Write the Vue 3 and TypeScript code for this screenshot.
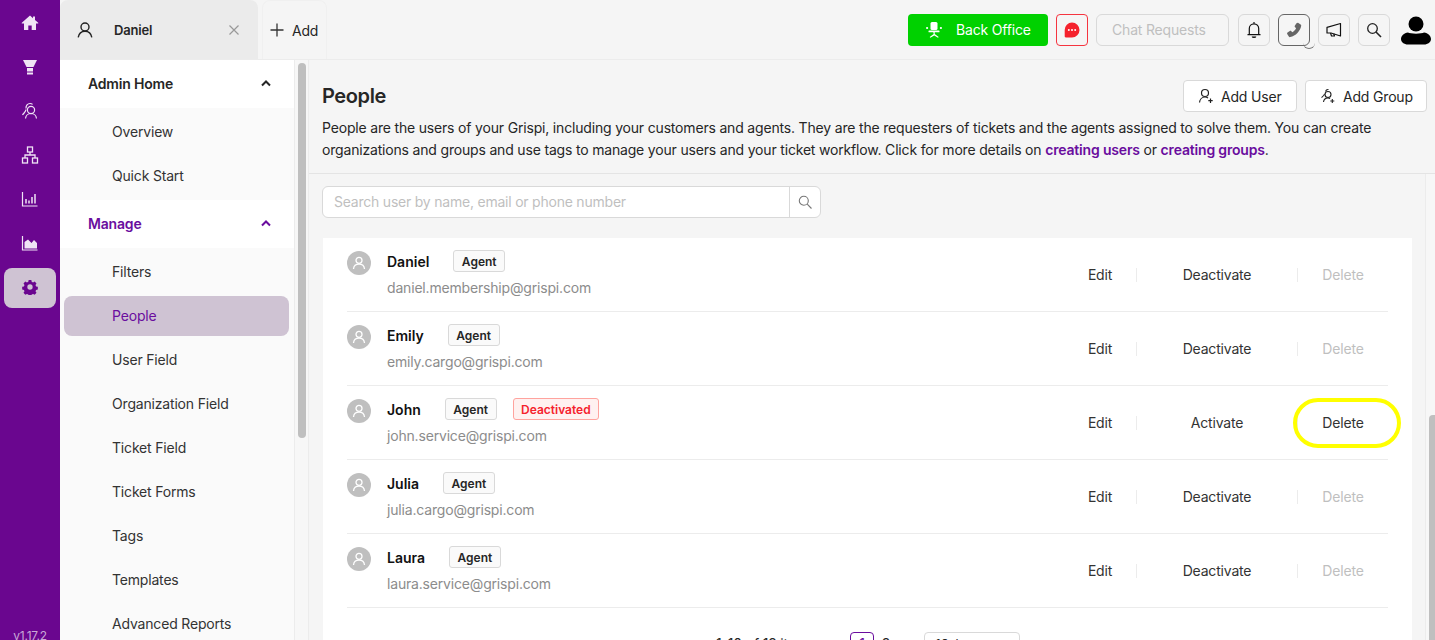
<template>
  <div class="app">
    <!-- Icon rail -->
    <aside class="rail">
      <a v-for="icon in railIcons" :key="icon.name" class="rail-item" :class="{ active: icon.name === 'settings' }">
        <svg :width="icon.size" :height="icon.size" viewBox="0 0 18 18" v-html="icon.svg"></svg>
      </a>
      <span class="version">v1.17.2</span>
    </aside>

    <div class="shell">
      <!-- Top bar -->
      <header class="topbar">
        <div class="tab tab-open">
          <svg class="tab-user" width="18" height="18" viewBox="0 0 18 18" fill="none" stroke="#222" stroke-width="1.4"><circle cx="9" cy="6" r="4"/><path d="M2.2 16.4c.6-3.600 3.300-6.200 6.800-6.200s6.200 2.600 6.800 6.200"/></svg>
          <span class="tab-name">Daniel</span>
          <svg width="12" height="12" viewBox="0 0 12 12" stroke="#999" stroke-width="1.2"><path d="M1.500 1.500l9 9M10.500 1.500l-9 9"/></svg>
        </div>
        <div class="tab tab-add">
          <svg width="14" height="14" viewBox="0 0 14 14" stroke="#333" stroke-width="1.300"><path d="M7 .5v13M.5 7h13"/></svg>
          <span>Add</span>
        </div>

        <div class="top-actions">
          <button class="btn-office">
            <svg width="18" height="18" viewBox="0 0 18 18" fill="#fff"><rect x="5.500" y="1" width="7" height="8" rx="1.500"/><rect x="1" y="6" width="2.200" height="2" rx="1"/><rect x="14.800" y="6" width="2.200" height="2" rx="1"/><rect x="3.500" y="9.500" width="11" height="1.800" rx=".6"/><path d="M8.300 11h1.400v2l4 2.900-.7.900-3.800-2.400-3.800 2.400-.7-.9 4-2.900z"/></svg>
            <span>Back Office</span>
          </button>
          <button class="icon-btn chat-btn">
            <svg width="18" height="18" viewBox="0 0 18 18"><path fill="#f5222d" d="M9 1.500a7.500 7.500 0 0 1 0 15H2.800c-.7 0-1.100-.6-1.100-1.200V9A7.500 7.500 0 0 1 9 1.500z"/><circle cx="5.800" cy="9" r="1" fill="#fff"/><circle cx="9" cy="9" r="1" fill="#fff"/><circle cx="12.200" cy="9" r="1" fill="#fff"/></svg>
          </button>
          <button class="chat-requests">Chat Requests</button>
          <button class="icon-btn">
            <svg width="16" height="18" viewBox="0 0 16 18" fill="none" stroke="#111" stroke-width="1.200"><path d="M3.300 13.500V7.500a4.700 4.700 0 0 1 9.400 0v6M1.500 13.700h13"/><path d="M8 1v1.500"/><path d="M6.300 15.500c.4 1 3 1 3.400 0" stroke-width="1.600"/></svg>
          </button>
          <div class="phone-wrap">
            <button class="icon-btn phone-btn">
              <svg width="18" height="18" viewBox="0 0 18 18"><path fill="#666" d="M13 1.800l2.600 1.600c.5.300.7.800.6 1.400-.8 5.300-5.500 10.200-11 11.300-.6.100-1.100-.1-1.400-.6l-1.600-2.600c-.3-.5-.2-1 .3-1.400l2.300-1.500c.4-.3.900-.2 1.300.1l1.200 1.200c1.600-.9 3-2.400 3.800-4l-1.200-1.200c-.3-.4-.4-.9-.1-1.300l1.500-2.300c.4-.5.900-.6 1.700-.7z"/></svg>
            </button>
            <i class="phone-arc"></i>
          </div>
          <button class="icon-btn">
            <svg width="18" height="18" viewBox="0 0 18 18" fill="none" stroke="#111" stroke-width="1.200" stroke-linejoin="round"><path d="M15.500 2.500v12.500L6 12H2V6.300z"/><path d="M5.500 12l1 3h3l-.7-2.200"/></svg>
          </button>
          <button class="icon-btn">
            <svg width="16" height="16" viewBox="0 0 16 16" fill="none" stroke="#222" stroke-width="1.300"><circle cx="6.500" cy="6.500" r="4.800"/><path d="M10 10l5 5" stroke-width="1.600"/></svg>
          </button>
          <svg class="me" width="30" height="30" viewBox="0 0 30 30" fill="#000"><circle cx="15" cy="9" r="7.500"/><path d="M7 17.500c2 1.500 14 1.500 16 0 4 .6 7 3.500 7 6.500 0 3-3 5.500-7 5.500H7c-4 0-7-2.500-7-5.500s3-5.900 7-6.500z"/></svg>
        </div>
      </header>

      <div class="body">
        <!-- Sidebar -->
        <nav class="sidebar">
          <template v-for="group in navGroups" :key="group.title">
            <div class="group-head" :class="{ open: group.active }">
              <span>{{ group.title }}</span>
              <svg width="10" height="7" viewBox="0 0 10 7" fill="none" stroke="currentColor" stroke-width="2"><path d="M1 5.500l4-4 4 4"/></svg>
            </div>
            <ul class="group-items">
              <li v-for="item in group.items" :key="item" :class="{ current: item === 'People' }">{{ item }}</li>
            </ul>
          </template>
        </nav>
        <div class="side-scroll"><i></i></div>

        <!-- Main -->
        <main class="main">
          <section class="page-head">
            <div class="title-row">
              <h1>People</h1>
              <div class="title-actions">
                <button class="btn btn-user">
                  <svg width="16" height="16" viewBox="0 0 16 16" fill="none" stroke="#222" stroke-width="1.200"><circle cx="7" cy="5" r="3.500"/><path d="M1.500 14.500c.3-3 2.600-5.500 5.500-5.500 1.200 0 2.200.4 3 1M12.500 10.500v4.500M10.300 12.700h4.400"/></svg>
                  Add User
                </button>
                <button class="btn btn-group">
                  <svg width="16" height="16" viewBox="0 0 16 16" fill="none" stroke="#222" stroke-width="1.100"><circle cx="8" cy="6.500" r="3"/><path d="M3.500 14c.3-2.400 2.100-4 4.500-4 .8 0 1.500.2 2.100.5M12.300 11v4M10.300 13h4M5.500 3.500C6 2 7.200 1.300 8.500 1.500M4.500 6c-.3 1.500-1.800 2.500-3 3.500"/></svg>
                  Add Group
                </button>
              </div>
            </div>
            <p>
              People are the users of your Grispi, including your customers and agents. They are the requesters of tickets and the agents assigned to solve them. You can create
              organizations and groups and use tags to manage your users and your ticket workflow. Click for more details on <a>creating users</a> or <a>creating groups</a>.
            </p>
          </section>

          <div class="content">
            <div class="content-inner">
              <div class="search">
                <input type="text" placeholder="Search user by name, email or phone number" />
                <span class="search-btn">
                  <svg width="14" height="14" viewBox="0 0 14 14" fill="none" stroke="#777" stroke-width="1.100"><circle cx="5.800" cy="5.800" r="4.500"/><path d="M9.200 9.200l4.300 4.300"/></svg>
                </span>
              </div>

              <div class="list">
                <div v-for="user in users" :key="user.email" class="row">
                  <div class="who">
                    <span class="avatar">
                      <svg width="14" height="14" viewBox="0 0 14 14" fill="none" stroke="#fff" stroke-width="1.300"><circle cx="7" cy="4.300" r="3"/><path d="M1.500 13c.3-3 2.700-4.800 5.500-4.800s5.200 1.800 5.500 4.800"/></svg>
                    </span>
                    <div class="who-text">
                      <div class="name-line">
                        <strong>{{ user.name }}</strong>
                        <span class="tag">Agent</span>
                        <span v-if="user.deactivated" class="tag tag-red">Deactivated</span>
                      </div>
                      <div class="email">{{ user.email }}</div>
                    </div>
                  </div>
                  <div class="actions">
                    <span class="act act-edit">Edit</span>
                    <span class="act act-toggle">{{ user.deactivated ? 'Activate' : 'Deactivate' }}</span>
                    <span class="act act-delete" :class="{ disabled: !user.deactivated }">
                      Delete
                      <i v-if="user.deactivated" class="ring"></i>
                    </span>
                  </div>
                </div>

                <div class="pager">
                  <span class="pager-total">1-10 of 12 items</span>
                  <span class="pager-arrow">‹</span>
                  <span class="page page-on">1</span>
                  <span class="page">2</span>
                  <span class="pager-arrow next">›</span>
                  <span class="page-size">10 / page</span>
                </div>
              </div>
            </div>
            <div class="main-scroll"><i></i></div>
          </div>
        </main>
      </div>
    </div>
  </div>
</template>

<script setup lang="ts">
interface User { name: string; email: string; deactivated?: boolean }

const railIcons = [
  { name: 'home', size: 18, svg: '<path fill="#f0e4f5" d="M9 1.500L.8 8.800c-.3.300-.1.700.3.700H3V16h4.300v-4.500h3.400V16H15V9.500h1.900c.4 0 .6-.4.300-.7L14 6V2.500h-2v1.700z"/>' },
  { name: 'funnel', size: 18, svg: '<path fill="#f0e4f5" d="M2 2h14l-3.500 7h-7z"/><rect fill="#f0e4f5" x="6" y="10" width="6" height="3.500"/><rect fill="#f0e4f5" x="6" y="14.500" width="6" height="2"/>' },
  { name: 'people', size: 18, svg: '<g fill="none" stroke="#f0e4f5" stroke-width="1.200"><circle cx="10" cy="8" r="3.600"/><path d="M4.500 16.500c.3-2.800 2.600-5 5.500-5s5.200 2.200 5.500 5"/><path d="M5 6.500C4.800 3.500 6.600 1.500 9 1.500c1 0 1.900.3 2.600.9M5 7.500c-.2 2-2 3.500-3.500 5.500"/></g>' },
  { name: 'org', size: 18, svg: '<g fill="none" stroke="#f0e4f5" stroke-width="1.300"><rect x="6.500" y="1" width="5" height="5"/><rect x="1.500" y="12" width="5" height="5"/><rect x="11.500" y="12" width="5" height="5"/><path d="M9 6v3M4 12V9h10v3"/></g>' },
  { name: 'bars', size: 18, svg: '<g fill="none" stroke="#f0e4f5"><path stroke-width="1.200" d="M1.500 2v14h15"/><path stroke-width="1.500" d="M5 13.500V9M8 13.500V10.500M11 13.500V7M14 13.500V4"/></g>' },
  { name: 'area', size: 18, svg: '<path fill="none" stroke="#f0e4f5" stroke-width="1.200" d="M1.500 2v14h15"/><path fill="#f0e4f5" d="M3.500 14.500V8l3.500-2.500 3.500 3.500 2.500-3 3 3v5.500z"/>' },
  { name: 'settings', size: 16, svg: '<path fill-rule="evenodd" fill="#6a068f" d="M7.500 1h3l.4 2.100 1.500.7 1.900-1 2 2.200-1.100 1.800.6 1.500 2 .5v2.900l-2 .6-.6 1.500 1.100 1.800-2 2.200-1.900-1-1.500.6-.4 2.100h-3l-.4-2.100-1.500-.6-1.900 1-2-2.200 1.100-1.800-.6-1.500-2-.6V8.800l2-.5.6-1.500L1.700 5l2-2.200 1.900 1 1.500-.7zM9 6a3 3 0 1 0 0 6 3 3 0 0 0 0-6z"/>' },
]

const navGroups = [
  { title: 'Admin Home', active: false, items: ['Overview', 'Quick Start'] },
  {
    title: 'Manage',
    active: true,
    items: ['Filters', 'People', 'User Field', 'Organization Field', 'Ticket Field', 'Ticket Forms', 'Tags', 'Templates', 'Advanced Reports'],
  },
]

const users: User[] = [
  { name: 'Daniel', email: 'daniel.membership@grispi.com' },
  { name: 'Emily', email: 'emily.cargo@grispi.com' },
  { name: 'John', email: 'john.service@grispi.com', deactivated: true },
  { name: 'Julia', email: 'julia.cargo@grispi.com' },
  { name: 'Laura', email: 'laura.service@grispi.com' },
]
</script>

<style>
html, body { margin: 0; overflow: hidden; }
</style>

<style scoped>
* { box-sizing: border-box; }
.app {
  display: flex;
  width: 1435px;
  height: 640px;
  overflow: hidden;
  background: #f5f5f5;
  color: #262626;
  font-family: Inter, 'Liberation Sans', sans-serif;
  font-size: 14px;
  letter-spacing: -0.18px;
}
button { font-family: inherit; font-size: 14px; letter-spacing: inherit; cursor: pointer; }

/* Rail */
.rail {
  width: 60px;
  flex: none;
  display: flex;
  flex-direction: column;
  align-items: center;
  gap: 4px;
  padding-top: 4px;
  background: #6a068f;
  overflow: hidden;
}
.rail-item {
  width: 52px;
  height: 40px;
  flex: none;
  display: flex;
  align-items: center;
  justify-content: center;
  border-radius: 8px;
}
.rail-item svg { margin-top: -2px; }
.rail-item.active { background: #cfc3d3; }
.version {
  margin-top: auto;
  margin-bottom: -3px;
  font-size: 12px;
  line-height: 14px;
  color: #c9a9d6;
  white-space: nowrap;
}

.shell { flex: 1; min-width: 0; display: flex; flex-direction: column; }

/* Top bar */
.topbar {
  height: 60px;
  flex: none;
  display: flex;
  border-bottom: 1px solid #ececec;
}
.tab { display: flex; align-items: center; height: 59px; border-radius: 8px 8px 0 0; }
.tab-open { width: 198px; padding: 0 18px 0 16px; background: #ebebeb; }
.tab-user { margin-right: 20px; }
.tab-name { flex: 1; font-size: 13px; font-weight: 600; }
.tab-add {
  width: 65px;
  margin-left: 4px;
  gap: 8px;
  padding-left: 7px;
  border: 1px solid #f0f0f0;
  border-bottom: 0;
}
.top-actions { margin-left: auto; display: flex; align-items: center; gap: 8px; padding: 0 4px 0 0; }
.btn-office {
  width: 140px;
  height: 32px;
  display: flex;
  align-items: center;
  gap: 13px;
  padding: 0 0 0 17px;
  color: #fff;
  background: #00d100;
  border: 0;
  border-radius: 4px;
}
.icon-btn {
  width: 32px;
  height: 32px;
  display: flex;
  align-items: center;
  justify-content: center;
  padding: 0;
  background: #f5f5f5;
  border: 1px solid #d9d9d9;
  border-radius: 6px;
}
.chat-btn { border-color: #f5343f; border-radius: 4px; }
.chat-requests {
  width: 133px;
  height: 32px;
  margin-right: 1px;
  padding: 0 0 0 15px;
  text-align: left;
  color: #bfbfbf;
  background: #f5f5f5;
  border: 1px solid #d9d9d9;
  border-radius: 6px;
}
.phone-wrap { position: relative; display: flex; }
.phone-btn { border-color: #666; }
.phone-arc {
  position: absolute;
  right: -5px;
  bottom: -3px;
  width: 12px;
  height: 6px;
  border-bottom: 1px solid #777;
  border-radius: 0 0 10px 10px;
}
.me { margin-left: 3px; }

/* Sidebar */
.body { flex: 1; min-height: 0; display: flex; }
.sidebar { width: 234px; flex: none; overflow: hidden; background: #fafafa; }
.group-head {
  height: 48px;
  display: flex;
  align-items: center;
  justify-content: space-between;
  padding: 0 23px 2px 28px;
  background: #fff;
  font-weight: 600;
  color: #262626;
}
.group-head.open { color: #6a0d9e; }
.group-items { list-style: none; margin: 0; padding: 2px 0; }
.group-items li {
  height: 44px;
  display: flex;
  align-items: center;
  padding: 0 0 2px 52px;
  color: #333;
}
.group-items li.current {
  height: 40px;
  margin: 2px 5px 2px 4px;
  padding-left: 48px;
  color: #6a0d9e;
  background: #cfc3d3;
  border-radius: 8px;
}
.side-scroll {
  width: 15px;
  flex: none;
  padding: 3px 0 0 4px;
  background: #f7f7f7;
  border-left: 1px solid #ececec;
  border-right: 1px solid #ececec;
}
.side-scroll i { display: block; width: 8px; height: 375px; margin-left: -1px; background: #bfbfbf; border-radius: 4px; }

/* Main */
.main { flex: 1; min-width: 0; display: flex; flex-direction: column; }
.page-head { height: 114px; flex: none; padding: 20px 8px 0 13px; border-bottom: 1px solid #e4e4e4; }
.title-row { display: flex; align-items: center; justify-content: space-between; height: 32px; }
.title-row h1 { margin: 0; font-size: 20px; font-weight: 600; letter-spacing: -0.4px; color: #262626; }
.title-actions { display: flex; gap: 8px; }
.btn {
  height: 32px;
  display: flex;
  align-items: center;
  gap: 7px;
  padding: 0 0 0 14px;
  color: #262626;
  background: #fff;
  border: 1px solid #d9d9d9;
  border-radius: 4px;
}
.btn-user { width: 114px; }
.btn-group { width: 122px; }
.page-head p { margin: 5px 0 0; line-height: 22px; color: #262626; }
.page-head a { font-weight: 600; color: #6a0d9e; }

.content { flex: 1; min-height: 0; display: flex; }
.content-inner { flex: 1; min-width: 0; padding: 12px 13px 0 14px; overflow: hidden; }
.search {
  width: 499px;
  height: 32px;
  margin-left: -1px;
  display: flex;
  background: #fff;
  border: 1px solid #d9d9d9;
  border-radius: 6px;
}
.search input {
  flex: 1;
  min-width: 0;
  padding: 0 11px 2px;
  border: 0;
  outline: 0;
  background: transparent;
  font-family: inherit;
  font-size: 14px;
  letter-spacing: -0.22px;
  border-radius: 6px;
}
.search input::placeholder { color: #bfbfbf; }
.search-btn {
  width: 31px;
  display: flex;
  align-items: center;
  justify-content: center;
  border-left: 1px solid #d9d9d9;
}
.list { margin-top: 20px; padding: 0 24px; background: #fff; }
.row {
  height: 74px;
  display: flex;
  justify-content: space-between;
  border-bottom: 1px solid #ececec;
}
.who { display: flex; padding-top: 13px; }
.avatar {
  width: 24px;
  height: 24px;
  display: flex;
  align-items: center;
  justify-content: center;
  border-radius: 50%;
  background: #bfbfbf;
}
.who-text { margin-left: 16px; }
.name-line { display: flex; align-items: center; height: 24px; margin-top: -2px; }
.name-line strong { font-weight: 600; letter-spacing: 0; color: #111; margin-right: 24px; }
.tag {
  height: 22px;
  display: flex;
  align-items: center;
  padding: 0 7.500px;
  font-size: 12px;
  font-weight: 600;
  letter-spacing: 0;
  color: #262626;
  background: #fafafa;
  border: 1px solid #d9d9d9;
  border-radius: 3px;
}
.tag-red { margin-left: 16px; color: #f5222d; background: #fff1f0; border-color: #ffa39e; }
.email { margin-top: 4px; line-height: 22px; color: #8c8c8c; }
.actions { display: flex; align-items: center; }
.act { position: relative; display: flex; justify-content: center; align-items: center; height: 14px; color: #333; }
.act-edit { width: 72px; padding-right: 1px; border-right: 1px solid #ececec; }
.act-toggle { width: 161px; border-right: 1px solid #ececec; }
.act-delete { width: 90px; }
.act-delete.disabled { color: #bfbfbf; }
.ring {
  position: absolute;
  left: -5px;
  top: -18px;
  width: 108px;
  height: 50px;
  border: 4px solid #ffff00;
  border-radius: 26px;
}

.pager { display: flex; align-items: flex-start; height: 60px; padding: 24px 0 0 369px; }
.pager > span { height: 24px; line-height: 24px; white-space: nowrap; }
.pager-total { width: 124px; }
.pager-arrow { width: 10px; color: #8c8c8c; }
.pager-arrow.next { margin-left: 4px; }
.page { width: 24px; text-align: center; }
.page-on { color: #6a0d9e; border: 1px solid #6a0d9e; border-radius: 4px; line-height: 22px !important; }
.pager > .page-size { width: 96px; height: 32px; padding-left: 10px; margin-left: 12px; border: 1px solid #d9d9d9; border-radius: 4px; }

.main-scroll { width: 10px; flex: none; padding: 241px 0 0 3px; background: #f7f7f7; border-left: 1px solid #ececec; }
.main-scroll i { display: block; width: 7px; height: 240px; background: #bfbfbf; border-radius: 4px 0 0 0; }
</style>
